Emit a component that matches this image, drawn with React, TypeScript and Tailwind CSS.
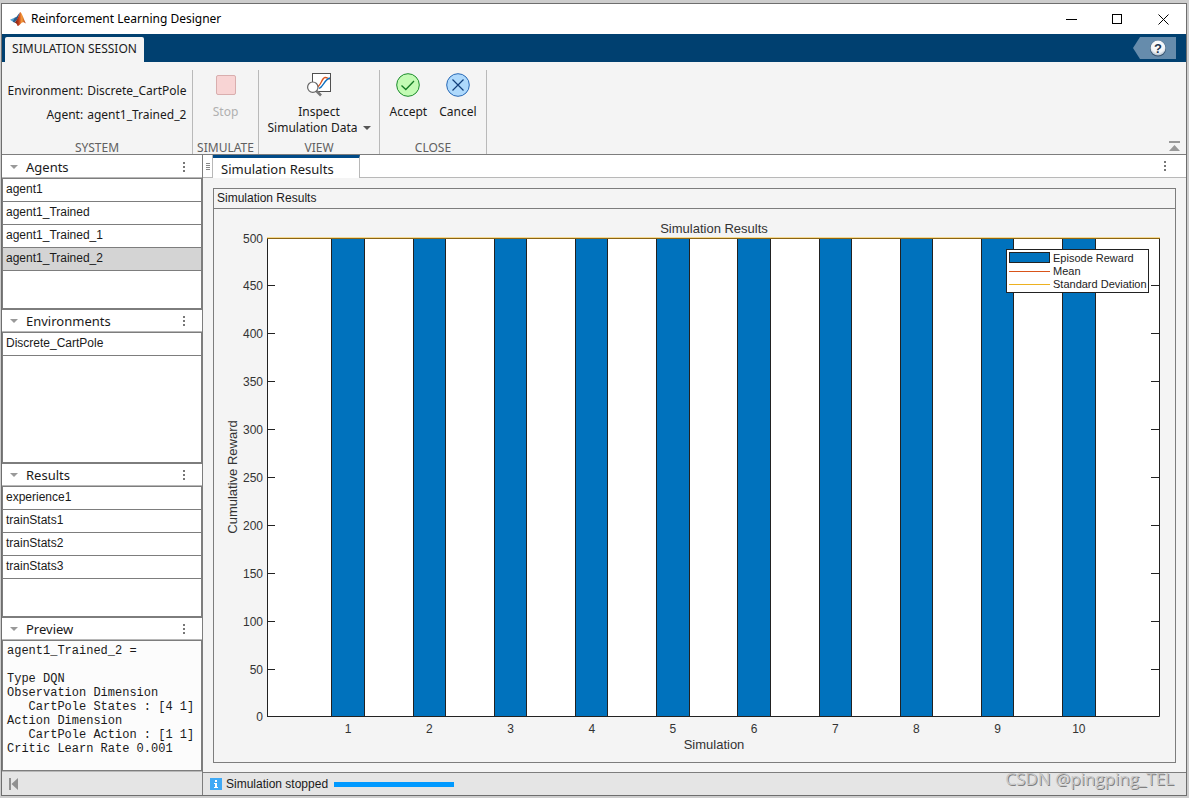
import { useState } from "react"
import type { ReactNode } from "react"

const agents = ["agent1", "agent1_Trained", "agent1_Trained_1", "agent1_Trained_2"]
const environments = ["Discrete_CartPole"]
const results = ["experience1", "trainStats1", "trainStats2", "trainStats3"]

const preview = `agent1_Trained_2 =

Type DQN
Observation Dimension
   CartPole States : [4 1]
Action Dimension
   CartPole Action : [1 1]
Critic Learn Rate 0.001`

const rewards = [500, 500, 500, 500, 500, 500, 500, 500, 500, 500]
const yTicks = [0, 50, 100, 150, 200, 250, 300, 350, 400, 450, 500]

function MatlabLogo() {
  return (
    <svg width="16" height="16" viewBox="0 0 16 16" aria-hidden="true">
      <defs>
        <linearGradient id="flame" x1="0" y1="0" x2="1" y2="0">
          <stop offset="0" stopColor="#5a1512" />
          <stop offset="0.4" stopColor="#c8401c" />
          <stop offset="0.65" stopColor="#f6a03c" />
          <stop offset="1" stopColor="#a52a14" />
        </linearGradient>
      </defs>
      <path d="M0 8.8 L5 6.6 L7.2 8.4 L4.2 11.6 Z" fill="#4f9fd0" />
      <path d="M5 6.6 C7 6 8 3.5 10 1.2 L7.4 8.6 L4.2 11.6 L2.8 10.6 Z" fill="#2b5d8c" />
      <path d="M10.2 1 C11.8 1.4 13.4 7.4 16 12.8 C14.2 11 12.6 10.8 11.4 12 C10.2 13.4 8.8 14.8 7.6 15 C7 13 5.8 11.8 4.2 11.6 C7 10.4 8.4 5 10.2 1 Z" fill="url(#flame)" />
    </svg>
  )
}

function InspectIcon() {
  return (
    <svg width="26" height="24" viewBox="0 0 26 24" fill="none" aria-hidden="true">
      <rect x="6.5" y="0.5" width="18" height="18" fill="#fff" stroke="#505050" />
      <path d="M11 14 C15 13.5 15.5 5 19 4.5 C21 4.3 22 5.5 24 6" stroke="#d9541e" strokeWidth="1.3" />
      <path d="M13 15.5 C17.5 14 18 6.5 24 5" stroke="#0a6fc0" strokeWidth="1.3" />
      <path d="M10.5 18 L15 22.5" stroke="#777" strokeWidth="2.6" />
      <circle cx="6.8" cy="14.2" r="5.2" fill="#fff" stroke="#666" strokeWidth="1.2" />
    </svg>
  )
}

function AcceptIcon() {
  return (
    <svg width="24" height="24" viewBox="0 0 24 24" fill="none" aria-hidden="true">
      <circle cx="12" cy="12" r="11.3" fill="#c3fbb4" stroke="#1c8c2c" />
      <path d="M5.5 12.5 L9.8 16.5 L18 8" stroke="#137a24" strokeWidth="1.3" />
    </svg>
  )
}

function CancelIcon() {
  return (
    <svg width="24" height="24" viewBox="0 0 24 24" fill="none" aria-hidden="true">
      <circle cx="12" cy="12" r="11.3" fill="#aed9fc" stroke="#2869b5" />
      <path d="M6.5 6.5 L17.5 17.5 M17.5 6.5 L6.5 17.5" stroke="#123f7c" strokeWidth="1.2" />
    </svg>
  )
}

function DotsIcon() {
  return (
    <svg width="2" height="10" viewBox="0 0 2 10" fill="#777" aria-hidden="true">
      <rect width="2" height="2" />
      <rect y="4" width="2" height="2" />
      <rect y="8" width="2" height="2" />
    </svg>
  )
}

function Panel({ title, children }: { title: string; children: ReactNode }) {
  return (
    <section className="group flex flex-1 flex-col">
      <header className="flex h-[23px] items-center border-t border-b border-t-[#7d7d7d] border-b-[#b8b8b8] bg-white pr-[17px] pl-2 group-first:border-t-white">
        <button className="flex items-center gap-2 text-[13px] leading-5" aria-label={`Collapse ${title}`}>
          <svg width="8" height="4" viewBox="0 0 8 4" fill="#999" aria-hidden="true">
            <path d="M0 0 H8 L4 4 Z" />
          </svg>
          {title}
        </button>
        <button className="ml-auto" aria-label={`${title} options`}>
          <DotsIcon />
        </button>
      </header>
      <div className="flex-1 border border-[#7d7d7d] bg-white">{children}</div>
    </section>
  )
}

function ItemList({ items, initial }: { items: string[]; initial?: string }) {
  const [selected, setSelected] = useState(initial)
  return (
    <ul className="font-['Liberation_Sans',sans-serif] text-xs">
      {items.map((item) => (
        <li key={item}>
          <button
            onClick={() => setSelected(item)}
            className={`block h-[23px] w-full border-b border-[#7d7d7d] px-[3px] pb-[2px] text-left ${
              item === selected ? "bg-[#d4d4d4]" : "bg-white"
            }`}
          >
            {item}
          </button>
        </li>
      ))}
    </ul>
  )
}

function ToolGroup({ label, className, children }: { label: string; className: string; children: ReactNode }) {
  return (
    <div className={`flex flex-col border-r border-[#b9b9b9] ${className}`}>
      <div className="flex flex-1 justify-center">{children}</div>
      <div className="text-center text-xs leading-3 text-[#606060]">{label}</div>
    </div>
  )
}

function RewardChart() {
  const left = 53
  const right = 945
  const top = 29
  const bottom = 507
  const step = (right + 1 - left) / (rewards.length + 1)
  // snap to the pixel grid so the hairlines stay crisp
  const xPos = (value: number) => Math.floor(left + step * value) + 0.5
  const yPos = (value: number) => Math.min(bottom, Math.floor(bottom + 1 - (value / 500) * (bottom + 1 - top))) + 0.5

  return (
    <svg
      viewBox="0 0 961 553"
      className="min-h-0 w-full flex-1 font-['Liberation_Sans',sans-serif]"
      role="img"
      aria-label="Cumulative reward for each simulation"
    >
      <rect x={left} y={top} width={right - left} height={bottom - top} fill="#fff" />
      {rewards.map((reward, i) => (
        <rect
          key={i}
          x={xPos(i + 0.8)}
          y={yPos(reward)}
          width={xPos(i + 1.2) - xPos(i + 0.8)}
          height={yPos(0) - yPos(reward)}
          fill="#0072bd"
          stroke="#222"
        />
      ))}
      <path d={`M${left + 0.5} ${top} V${bottom + 0.5} H${right + 0.5} V${top}`} fill="none" stroke="#222" />
      {yTicks.map((tick) => (
        <g key={tick}>
          <path d={`M${left} ${yPos(tick)} h8 M${right - 8} ${yPos(tick)} h8`} stroke="#222" />
          <text x={left - 4} y={yPos(tick) + 4.5} textAnchor="end" fontSize="12" fill="#333">
            {tick}
          </text>
        </g>
      ))}
      <path d={`M${left} ${top - 0.5} H${right + 1}`} stroke="#f5d98e" />
      <path d={`M${left} ${top + 0.5} H${right + 1}`} stroke="#8b6414" />
      {rewards.map((_, i) => (
        <text key={i} x={left + step * (i + 1)} y="524" textAnchor="middle" fontSize="12" fill="#333">
          {i + 1}
        </text>
      ))}
      <text x="500" y="24" textAnchor="middle" fontSize="13" fill="#333">
        Simulation Results
      </text>
      <text x="500" y="540" textAnchor="middle" fontSize="13" fill="#333">
        Simulation
      </text>
      <text transform="translate(23 268) rotate(-90)" textAnchor="middle" fontSize="13" fill="#333">
        Cumulative Reward
      </text>

      {/* legend */}
      <rect x="792.5" y="40.5" width="142" height="43" fill="#fff" stroke="#222" />
      <rect x="795.5" y="43.5" width="40" height="10" fill="#0072bd" stroke="#222" />
      <path d="M795 62.5 H836" stroke="#d95319" />
      <path d="M795 75.5 H836" stroke="#edb120" />
      <g fontSize="11" fill="#222">
        <text x="839" y="53">Episode Reward</text>
        <text x="839" y="66">Mean</text>
        <text x="839" y="79">Standard Deviation</text>
      </g>
    </svg>
  )
}

export default function App() {
  return (
    <div className="flex min-h-screen flex-col bg-[#cdcdcd] pt-[3px] pr-[2px] pb-[2px] pl-px font-['Noto_Sans',sans-serif] text-[#1a1a1a]">
      <div className="relative flex flex-1 flex-col border border-[#6e6e6e] bg-[#f4f4f4]">
        {/* title bar */}
        <header className="flex h-[30px] items-center bg-white pl-2 text-black">
          <MatlabLogo />
          <h1 className="ml-[5px] text-xs">Reinforcement Learning Designer</h1>
          <div className="ml-auto flex">
            <button aria-label="Minimize" className="flex w-[46px] justify-center">
              <svg width="11" height="11" viewBox="0 0 11 11" stroke="#000">
                <path d="M0 5.5 H11" />
              </svg>
            </button>
            <button aria-label="Maximize" className="flex w-[46px] justify-center">
              <svg width="11" height="11" viewBox="0 0 11 11" stroke="#000" fill="none">
                <rect x="0.5" y="0.5" width="9" height="9" />
              </svg>
            </button>
            <button aria-label="Close" className="flex w-[46px] justify-center">
              <svg width="11" height="11" viewBox="0 0 11 11" stroke="#000">
                <path d="M0.5 0.5 L10.5 10.5 M10.5 0.5 L0.5 10.5" />
              </svg>
            </button>
          </div>
        </header>

        <nav className="flex h-7 items-end bg-[#004070] pl-[3px]">
          <button className="h-[25px] w-[139px] rounded-t-[2px] bg-[#f4f4f4] pb-px text-xs">SIMULATION SESSION</button>
          <button aria-label="Help" className="mr-[10px] mb-[3px] ml-auto">
            <svg width="43" height="22" viewBox="0 0 43 22">
              <defs>
                <radialGradient id="help" cx="0.5" cy="0.35" r="0.65">
                  <stop offset="0" stopColor="#fff" />
                  <stop offset="0.7" stopColor="#f0f3f6" />
                  <stop offset="1" stopColor="#a9b9c9" />
                </radialGradient>
              </defs>
              <path d="M0 11 L7 0 H43 V22 H7 Z" fill="#668cac" />
              <circle cx="25" cy="11.5" r="8" fill="#36536f" />
              <circle cx="25" cy="11" r="7.5" fill="url(#help)" />
              <text x="25" y="15.5" textAnchor="middle" fontSize="13" fontWeight="bold" fontFamily="Liberation Sans" fill="#1d3650">
                ?
              </text>
            </svg>
          </button>
        </nav>

        {/* toolstrip */}
        <div className="flex h-[93px] border-b border-[#7d7d7d] pt-2 text-xs leading-4">
          <ToolGroup label="SYSTEM" className="w-[191px]">
            <dl className="grid h-12 grid-cols-[auto_auto] gap-x-1 pt-[9px] leading-6">
              <dt className="text-right">Environment:</dt>
              <dd>Discrete_CartPole</dd>
              <dt className="text-right">Agent:</dt>
              <dd>agent1_Trained_2</dd>
            </dl>
          </ToolGroup>
          <ToolGroup label="SIMULATE" className="w-[66px]">
            <button disabled className="flex flex-col items-center gap-[9px] self-start pt-[5px] text-[#b0b0b0]">
              <span className="size-5 rounded-[2px] border border-[#d9aeae] bg-[#f8d4d4]" />
              Stop
            </button>
          </ToolGroup>
          <ToolGroup label="VIEW" className="w-[121px]">
            <button className="flex flex-col items-center self-start pt-[3px]">
              <InspectIcon />
              <span className="mt-[7px]">Inspect</span>
              <span className="flex items-center gap-[6px] pl-px">
                Simulation Data
                <svg width="8" height="4" viewBox="0 0 8 4" fill="#555" aria-hidden="true">
                  <path d="M0 0 H8 L4 4 Z" />
                </svg>
              </span>
            </button>
          </ToolGroup>
          <ToolGroup label="CLOSE" className="w-[107px]">
            <div className="flex gap-3 self-start pt-[3px]">
              <button className="flex flex-col items-center gap-[7px]">
                <AcceptIcon />
                Accept
              </button>
              <button className="flex flex-col items-center gap-[7px]">
                <CancelIcon />
                Cancel
              </button>
            </div>
          </ToolGroup>
          <button aria-label="Collapse toolstrip" className="mt-auto mr-[6px] mb-[3px] ml-auto">
            <svg width="11" height="10" viewBox="0 0 11 10" fill="#999">
              <path d="M0 0 H11 V2 H0 Z M5.5 4 L11 10 H0 Z" />
            </svg>
          </button>
        </div>

        <div className="flex flex-1">
          <aside className="flex w-[201px] shrink-0 flex-col border-r border-[#7d7d7d]">
            <Panel title="Agents">
              <ItemList items={agents} initial="agent1_Trained_2" />
            </Panel>
            <Panel title="Environments">
              <ItemList items={environments} />
            </Panel>
            <Panel title="Results">
              <ItemList items={results} />
            </Panel>
            <Panel title="Preview">
              <pre className="h-full bg-[#fcfcfc] px-1 pt-[3px] font-['Liberation_Mono',monospace] text-xs leading-[14px]">
                {preview}
              </pre>
            </Panel>
            <div className="flex h-6 items-center border-t border-[#b8b8b8] bg-[#e5e5e5] pl-[7px]">
              <button aria-label="Collapse side panel">
                <svg width="9" height="12" viewBox="0 0 9 12" fill="#909090">
                  <path d="M0 0 H2 V12 H0 Z M9 0 V12 L2.5 6 Z" />
                </svg>
              </button>
            </div>
          </aside>

          <main className="flex min-w-0 flex-1 flex-col">
            <div className="flex h-[23px] bg-white">
              <div className="flex w-[10px] items-center justify-center border-r border-b border-[#b8b8b8]">
                <svg width="4" height="7" viewBox="0 0 4 7" stroke="#888" aria-hidden="true">
                  <path d="M0 0.5 H4 M0 2.5 H4 M0 4.5 H4 M0 6.5 H4" />
                </svg>
              </div>
              <button className="w-[147px] border-t-3 border-r border-t-[#004a87] border-r-[#b8b8b8] bg-white pt-px pl-2 text-left text-[13px] leading-5">
                Simulation Results
              </button>
              <div className="flex flex-1 items-center justify-end border-b border-[#b8b8b8] pr-5">
                <button aria-label="Document options">
                  <DotsIcon />
                </button>
              </div>
            </div>

            <div className="flex flex-1 flex-col p-[10px] pb-[9px]">
              <section className="flex flex-1 flex-col border border-[#7d7d7d]">
                <h2 className="h-5 border-b border-[#7d7d7d] pl-[3px] font-['Liberation_Sans',sans-serif] text-xs leading-[18px]">
                  Simulation Results
                </h2>
                <RewardChart />
              </section>
            </div>

            <footer className="flex h-[23px] items-center border-t border-[#7d7d7d] bg-[#e5e5e5] pl-[7px] font-['Liberation_Sans',sans-serif] text-xs">
              <svg width="12" height="12" viewBox="0 0 12 12" aria-hidden="true">
                <rect width="12" height="12" fill="#3fa9f5" />
                <path d="M5 2 H7 V4 H5 Z M4 5 H7 V9 H8 V10 H4 V9 H5 V6 H4 Z" fill="#fff" />
              </svg>
              <p className="ml-1">Simulation stopped</p>
              <div role="progressbar" aria-label="Simulation progress" className="ml-[6px] h-[5px] w-[120px] bg-[#0099ff]" />
            </footer>
          </main>
        </div>

        <p className="absolute right-3 bottom-1 font-['Open_Sans',sans-serif] text-[17px] leading-6 text-[#c9c9c9] [text-shadow:1px_1px_0_#808080]">
          CSDN @pingping_TEL
        </p>
      </div>
    </div>
  )
}
